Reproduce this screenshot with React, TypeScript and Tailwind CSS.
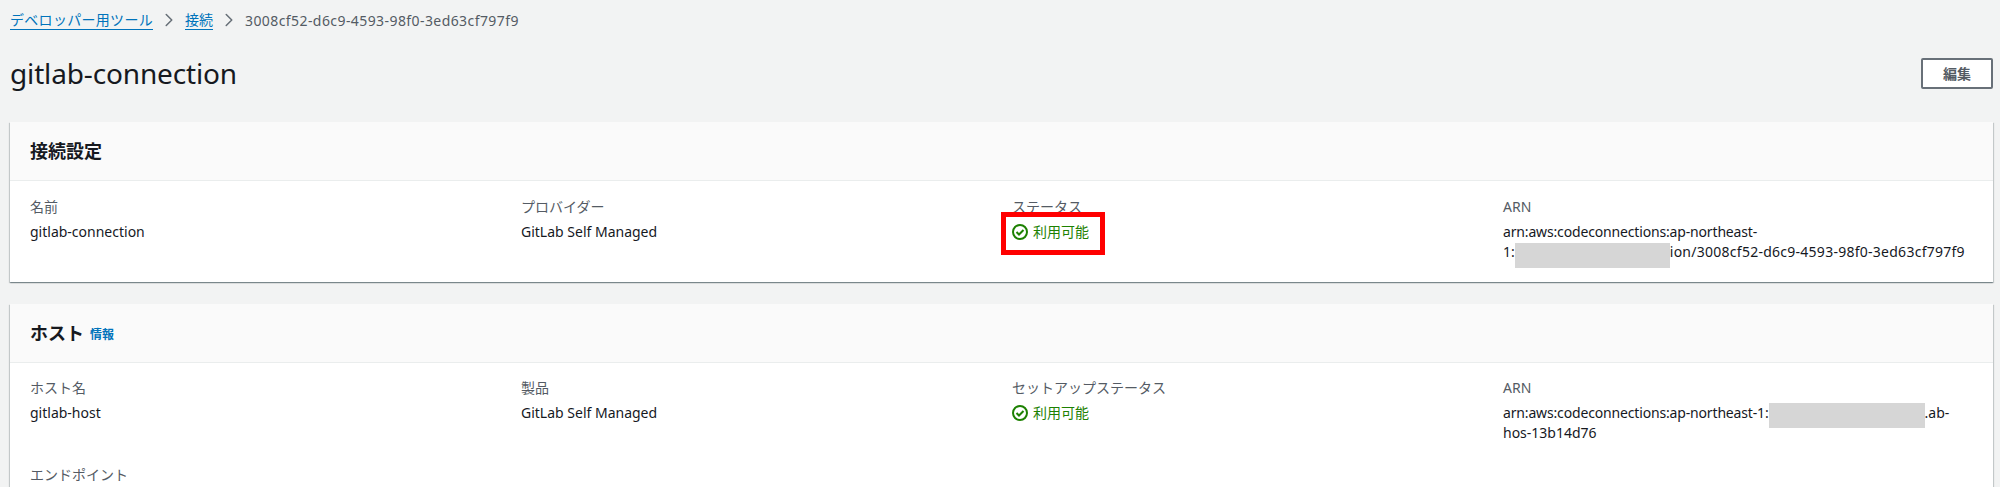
import React from 'react'
import { ChevronRight } from 'lucide-react'

const fontStack = "font-['Noto_Sans','Noto_Sans_CJK_JP',sans-serif]"
const cardShadow = 'bg-white shadow-[0_1px_1px_0_rgba(0,28,36,0.3),1px_1px_1px_0_rgba(0,28,36,0.15),-1px_1px_1px_0_rgba(0,28,36,0.15)]'

const StatusOk = () => (
  <div className="flex h-5 items-center gap-[5px] text-[14px] text-[#1d8102]">
    <svg width="16" height="16" viewBox="0 0 16 16" fill="none" stroke="currentColor" strokeWidth="2">
      <circle cx="8" cy="8" r="7" />
      <path d="M4.5 8l2.5 2.5 4.5-4.5" />
    </svg>
    <span>利用可能</span>
  </div>
)

const Field = ({ label, children }: { label: string; children: React.ReactNode }) => (
  <div>
    <div className="h-5 text-[14px] leading-5 text-[#545b64]">{label}</div>
    <div className="mt-[5px] text-[14px] leading-5 text-[#16191f]">{children}</div>
  </div>
)

const Redacted = ({ className }: { className: string }) => (
  <span className={`-my-[6px] inline-block h-[25px] bg-[#d6d6d6] ${className}`} />
)

const CardHeader = ({ children }: { children: React.ReactNode }) => (
  <div className="flex h-[59px] items-center gap-[6px] border-b border-[#eaeded] bg-[#fafafa] px-[20px]">
    {children}
  </div>
)

export default function App() {
  return (
    <div className={`h-[487px] overflow-hidden bg-[#f2f3f3] ${fontStack}`}>
      <div className="flex h-10 items-center pl-[10px] text-[14px]">
        <a className="border-b border-[#0073bb] leading-[18px] tracking-[0.3px] text-[#0073bb]">デベロッパー用ツール</a>
        <ChevronRight className="mx-[5px] text-[#687078]" size={22} strokeWidth={1.7} />
        <a className="border-b border-[#0073bb] leading-[18px] text-[#0073bb]">接続</a>
        <ChevronRight className="mx-[5px] text-[#687078]" size={22} strokeWidth={1.7} />
        <span className="tracking-[0.42px] text-[#545b64]">3008cf52-d6c9-4593-98f0-3ed63cf797f9</span>
      </div>

      <div className="mt-[2px] flex h-[62px] items-center justify-between pl-[10px] pr-[7px]">
        <h1 className="text-[28px] font-normal tracking-[-0.15px] text-[#16191f]">gitlab-connection</h1>
        <button className="h-[31px] w-[72px] rounded-[2px] border-2 border-[#687078] bg-white text-[14px] font-bold text-[#545b64]">
          編集
        </button>
      </div>

      <div className="ml-[10px] mr-[7px] mt-[18px] flex flex-col gap-[22px]">
        <section className={cardShadow}>
          <CardHeader>
            <h2 className="text-[18px] font-bold text-[#16191f]">接続設定</h2>
          </CardHeader>
          <div className="grid h-[101px] grid-cols-4 gap-6 pl-[20px] pr-[23px] pt-4">
            <Field label="名前">gitlab-connection</Field>
            <Field label="プロバイダー">GitLab Self Managed</Field>
            <div className="relative">
              <Field label="ステータス">
                <StatusOk />
              </Field>
              <div className="absolute left-[-11px] top-[15px] h-[43px] w-[104px] border-[5px] border-[#ff0000]" />
            </div>
            <Field label="ARN">
              <span className="tracking-[-0.16px]">arn:aws:codeconnections:ap-northeast-</span>
              <br />
              1:
              <Redacted className="w-[155px] align-[-5px]" />
              <span className="tracking-[0.26px]">ion/3008cf52-d6c9-4593-98f0-3ed63cf797f9</span>
            </Field>
          </div>
        </section>

        <section className={cardShadow}>
          <CardHeader>
            <h2 className="text-[18px] font-bold text-[#16191f]">ホスト</h2>
            <a className="mt-[3px] text-[12px] font-bold text-[#0073bb]">情報</a>
          </CardHeader>
          <div className="px-[20px] pb-10 pt-[15px]">
            <div className="grid grid-cols-4 gap-6 pr-[3px]">
              <Field label="ホスト名">gitlab-host</Field>
              <Field label="製品">GitLab Self Managed</Field>
              <Field label="セットアップステータス">
                <StatusOk />
              </Field>
              <Field label="ARN">
                <span className="tracking-[-0.16px]">arn:aws:codeconnections:ap-northeast-1:</span>
                <Redacted className="w-[156px] align-[-4px]" />
                .ab-
                <br />
                hos-13b14d76
              </Field>
            </div>
            <div className="mt-[22px] h-5 text-[14px] leading-5 text-[#545b64]">エンドポイント</div>
          </div>
        </section>
      </div>
    </div>
  )
}
